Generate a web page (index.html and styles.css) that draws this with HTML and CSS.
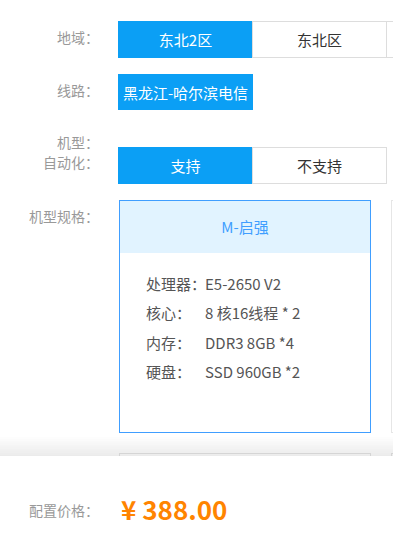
FILE: index.html
```html
<!DOCTYPE html>
<html lang="zh-CN">
<head>
  <meta charset="UTF-8">
  <meta name="viewport" content="width=device-width, initial-scale=1.0">
  <title>服务器配置</title>
  <link rel="stylesheet" href="styles.css">
</head>
<body>
  <div class="config">

    <!-- 地域 -->
    <div class="form-row row-region">
      <div class="label">地域：</div>
      <div class="options">
        <div class="opt active">东北2区</div>
        <div class="opt">东北区</div>
        <div class="opt"></div>
      </div>
    </div>

    <!-- 线路 -->
    <div class="form-row row-line">
      <div class="label">线路：</div>
      <div class="options">
        <div class="opt active">黑龙江-哈尔滨电信</div>
      </div>
    </div>

    <!-- 自动化 -->
    <div class="form-row row-auto">
      <div class="label">机型：<br>自动化：</div>
      <div class="options">
        <div class="opt active">支持</div>
        <div class="opt">不支持</div>
      </div>
    </div>

    <!-- 机型规格 -->
    <div class="form-row row-spec">
      <div class="label">机型规格：</div>
      <div class="cards">
        <div class="card selected">
          <div class="card-title">M-启强</div>
          <ul class="card-specs">
            <li><span class="spec-name">处理器：</span>E5-2650 V2</li>
            <li><span class="spec-name">核心：</span>8 核16线程 * 2</li>
            <li><span class="spec-name">内存：</span>DDR3 8GB *4</li>
            <li><span class="spec-name">硬盘：</span>SSD 960GB *2</li>
          </ul>
        </div>
        <div class="card"></div>
        <div class="card"></div>
        <div class="card"></div>
      </div>
    </div>

  </div>

  <!-- 价格栏 -->
  <div class="price-bar">
    <div class="label">配置价格：</div>
    <div class="price">¥ 388.00</div>
  </div>
</body>
</html>
```

FILE: styles.css
```css
html, body {
  margin: 0;
  height: 100%;
  overflow: hidden;
}
body {
  font-family: "Noto Sans CJK SC", sans-serif;
  background: #fff;
  color: #333;
}
.config {
  padding-top: 21px;
}
.form-row {
  display: flex;
  align-items: flex-start;
  margin-bottom: 16px;
}
.label {
  flex: 0 0 99px;
  margin-right: 19px;
  text-align: right;
  font-size: 14px;
  line-height: 20px;
  color: #999;
  white-space: nowrap;
}
.row-region .label,
.row-line .label,
.row-spec .label {
  padding-top: 6px;
}
.row-auto {
  margin-top: 22px;
}
.row-auto .options {
  margin-top: 15px;
}
.options {
  display: flex;
  flex-wrap: nowrap;
}
.opt {
  flex: 0 0 135px;
  height: 37px;
  box-sizing: border-box;
  border: 1px solid #ddd;
  display: flex;
  align-items: center;
  justify-content: center;
  font-size: 15px;
  color: #333;
  background: #fff;
  white-space: nowrap;
}
.opt + .opt {
  margin-left: -1px;
}
.opt.active {
  background: #0b9ff5;
  border-color: #0b9ff5;
  color: #fff;
}
.row-line .opt {
  height: 36px;
}
.cards {
  display: grid;
  grid-template-columns: repeat(2, 252px);
  gap: 20px;
  margin-left: 1px;
}
.card {
  height: 233px;
  box-sizing: border-box;
  border: 1px solid #e6e6e6;
}
.card.selected {
  border-color: #409eff;
}
.card-title {
  height: 52px;
  line-height: 52px;
  text-align: center;
  background: #e1f3ff;
  color: #409eff;
  font-size: 15px;
}
.card-specs {
  list-style: none;
  margin: 0;
  padding: 16px 0 0 26px;
}
.card-specs li {
  font-size: 15px;
  line-height: 29.4px;
  color: #555;
  white-space: nowrap;
}
.spec-name {
  display: inline-block;
  width: 59px;
}
.price-bar {
  position: fixed;
  left: 0;
  right: 0;
  bottom: 0;
  height: 96px;
  box-sizing: border-box;
  padding-top: 10px;
  background: #fff;
  display: flex;
  align-items: center;
}
.price-bar::before {
  content: "";
  position: absolute;
  left: 0;
  right: 0;
  top: -20px;
  height: 20px;
  background: linear-gradient(rgba(0, 0, 0, 0), rgba(0, 0, 0, 0.08));
}
.price-bar .label {
  padding-top: 2px;
}
.price {
  font-size: 26px;
  font-weight: bold;
  color: #ff8400;
  line-height: 30px;
  padding-left: 3px;
}
```
